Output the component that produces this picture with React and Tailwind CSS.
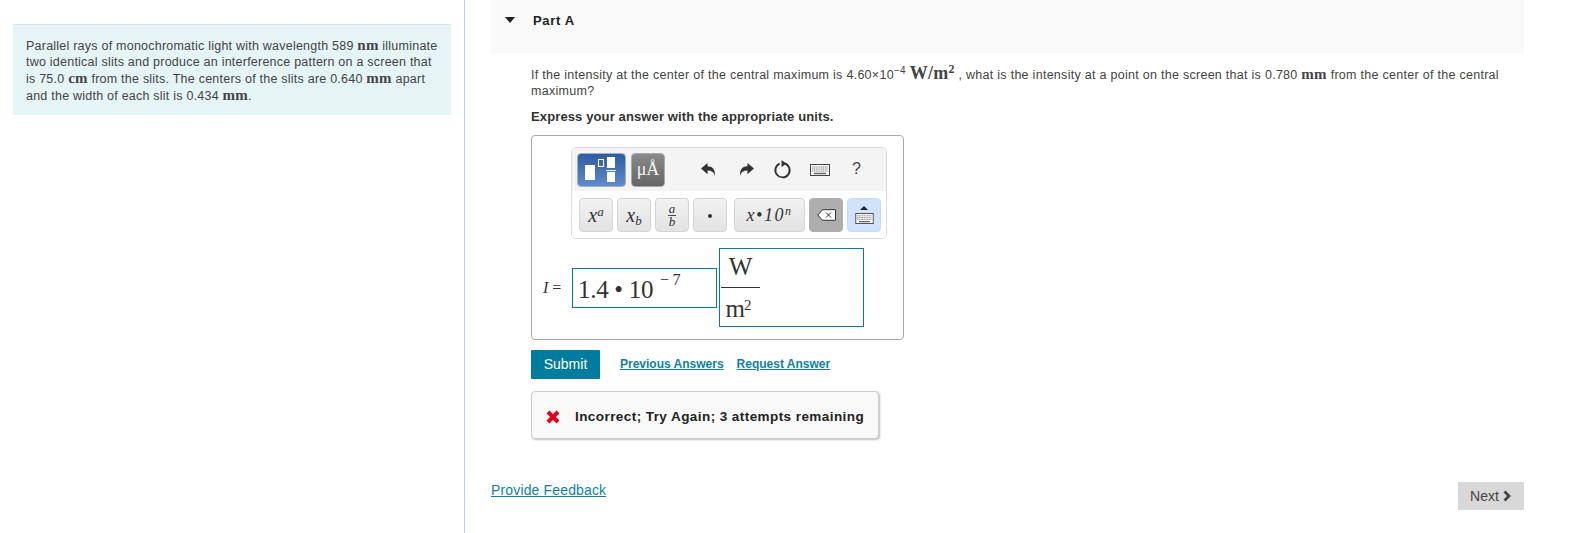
const M = ({ children }) => (
  <span className="font-['Liberation_Serif',serif] text-[15px] font-bold text-[#444]">{children}</span>
);

const KeyboardIcon = ({ className }) => (
  <svg viewBox="0 0 20 12" className={className}>
    <rect x="0.5" y="0.5" width="19" height="11" fill="#fff" stroke="#444" />
    <path d="M2 3h16M2 5h16M2 7h16" stroke="#777" strokeWidth="1" strokeDasharray="1.2 .6" />
    <path d="M4 9.500h12" stroke="#666" strokeWidth="1.400" />
  </svg>
);

const MathKey = ({ children, className = "w-[34px]" }) => (
  <div className={`${className} h-[34px] flex items-center justify-center rounded-[4px] border border-[#d4d4d4] bg-gradient-to-b from-[#f2f2f2] to-[#e2e2e2] font-['Liberation_Serif',serif] italic text-[#333]`}>
    {children}
  </div>
);

export default function App() {
  return (
    <div className="flex h-[533px] w-[1575px] overflow-hidden bg-white font-['Liberation_Sans',sans-serif] text-[#333]">
      <aside className="w-[465px] shrink-0 border-r border-[#bcd0e6] pl-[13px] pr-[13px] pt-[24px]">
        <div className="h-[91px] border-t border-[#d5e3e6] bg-[#e5f5f6] px-[13px] pt-[12px] text-[12.5px] leading-[16px] tracking-[0.23px] text-[#444]">
          Parallel rays of monochromatic light with wavelength 589 <M>nm</M> illuminate two identical slits and produce an interference pattern on a screen that is 75.0 <M>cm</M> from the slits. The centers of the slits are 0.640 <M>mm</M> apart and the width of each slit is 0.434 <M>mm</M>.
        </div>
      </aside>

      <main className="flex w-[1059px] shrink-0 flex-col pl-[26px]">
        <div className="flex h-[53px] w-[1033px] items-start bg-[#f9f9f9] pl-[14px] pt-[13px]">
          <svg viewBox="0 0 10 6" className="mt-[4px] h-[6px] w-[10px] fill-[#222]"><path d="M0 0h10L5 6z" /></svg>
          <span className="ml-[18px] text-[13px] font-bold leading-[16px] tracking-[0.65px] text-[#222]">Part A</span>
        </div>

        <div className="flex flex-1 flex-col pl-[40px]">
          <p className="mt-[12px] w-[975px] text-[12.5px] leading-[16px] tracking-[0.28px] text-[#444]">
            If the intensity at the center of the central maximum is 4.60×10<sup className="text-[10px] leading-none">−4</sup> <span className="font-['Liberation_Serif',serif] text-[18px] font-bold">W/m<sup className="text-[12px] leading-none">2</sup></span> , what is the intensity at a point on the screen that is 0.780 <M>mm</M> from the center of the central maximum?
          </p>
          <p className="mt-[10px] text-[13px] font-bold leading-[16px] tracking-[0.12px] text-[#333]">Express your answer with the appropriate units.</p>

          <div className="mt-[10px] h-[205px] w-[373px] rounded-[4px] border border-[#aaa] pl-[39px] pt-[11px]">
            <div className="h-[92px] w-[316px] overflow-hidden rounded-[5px] border border-[#ddd]">
              <div className="flex h-[43px] items-start bg-[#f4f4f4] pl-[5px] pt-[5px]">
                <div className="flex h-[34px] w-[49px] items-center justify-center rounded-[4px] border border-[#9fb0cc] bg-gradient-to-b from-[#2f5ba3] to-[#5f8ccb]">
                  <svg viewBox="0 0 40 26" className="h-[26px] w-[40px] fill-white">
                    <rect x="3" y="8" width="10" height="15" />
                    <rect x="16.500" y="2.500" width="5" height="7" fill="none" stroke="#fff" strokeWidth="1" />
                    <rect x="25" y="0" width="8" height="11" />
                    <rect x="24" y="13" width="10" height="1" />
                    <rect x="25" y="15" width="8" height="10" />
                  </svg>
                </div>
                <div className="ml-[5px] flex h-[34px] w-[34px] items-center justify-center rounded-[4px] border border-[#aaa] bg-gradient-to-b from-[#8a8a8a] to-[#666] pb-[2px] font-['Liberation_Serif',serif] text-[18px] leading-none text-[#f4f4f4]">
                  μÅ
                </div>
                <svg viewBox="0 0 16 14" className="ml-[36px] mt-[9px] h-[15px] w-[15px] fill-[#333]"><path d="M0 6 7 0v3.600c5 .1 8.200 3.200 8 10.200-1-3.800-3.500-5.800-8-5.800V12z" /></svg>
                <svg viewBox="0 0 16 14" className="ml-[23px] mt-[9px] h-[15px] w-[15px] fill-[#333]"><path d="M16 6 9 0v3.600C4 3.700.8 6.800 1 13.800 2 10 4.500 8 9 8v4z" /></svg>
                <svg viewBox="0 0 20 20" fill="none" className="ml-[19px] mt-[7px] h-[19px] w-[19px]">
                  <path d="M12.500 3.700a7.500 7.500 0 1 1-5.500.2" stroke="#333" strokeWidth="2" />
                  <path d="M9 0v7.500l5-3.700z" fill="#333" />
                </svg>
                <KeyboardIcon className="ml-[18px] mt-[11px] h-[12px] w-[20px]" />
                <span className="ml-[22px] mt-[6px] text-[16px] leading-[20px] text-[#444]">?</span>
              </div>
              <div className="flex h-[47px] items-start gap-[4px] bg-white pl-[7px] pt-[7px]">
                <MathKey><span className="text-[20px]">x<sup className="text-[13px] leading-none">a</sup></span></MathKey>
                <MathKey><span className="text-[20px]">x<sub className="text-[13px] leading-none">b</sub></span></MathKey>
                <MathKey>
                  <span className="flex flex-col items-center text-[13px] leading-[12px]"><span className="border-b border-[#444] px-[1px]">a</span><span>b</span></span>
                </MathKey>
                <MathKey><span className="mt-[1px] h-[4px] w-[4px] rounded-full bg-[#333]" /></MathKey>
                <MathKey className="ml-[3px] w-[71px]"><span className="text-[18px] tracking-[1.5px]">x•10<sup className="text-[12px] leading-none">n</sup></span></MathKey>
                <div className="flex h-[34px] w-[34px] items-center justify-center rounded-[4px] border border-[#b0b0b0] bg-[#aeaeae]">
                  <svg viewBox="0 0 19 12" className="h-[12px] w-[19px]">
                    <path d="M.8 6 5.500.7h13v10.600h-13z" fill="#fff" stroke="#333" />
                    <path d="m9 3.500 5 5m0-5-5 5" stroke="#333" />
                  </svg>
                </div>
                <div className="flex h-[34px] w-[34px] flex-col items-center justify-center gap-[3px] rounded-[4px] border border-[#c5dcf5] bg-[#cfe4fc]">
                  <svg viewBox="0 0 8 4" className="h-[4px] w-[8px] fill-[#222]"><path d="M0 4h8L4 0z" /></svg>
                  <KeyboardIcon className="h-[11px] w-[19px]" />
                </div>
              </div>
            </div>

            <div className="-ml-[28px] mt-[9px] flex items-center font-['Liberation_Serif',serif] text-[#333]">
              <span className="w-[29px] text-[16px]"><i>I</i> =</span>
              <div className="flex h-[40px] w-[145px] items-center border border-[#007c9e] pl-[5px] pt-[3px] text-[25px] leading-none tracking-[-0.3px]">
                1.4 • 10<sup className="ml-[7px] -mt-[3px] text-[16px] leading-none">− 7</sup>
              </div>
              <div className="ml-[2px] h-[79px] w-[145px] border border-[#007c9e] pl-[1px] text-[25px] leading-none">
                <div className="flex w-[39px] flex-col items-center">
                  <span className="h-[39px] w-full border-b border-[#333] pt-[5px] text-center">W</span>
                  <span className="-ml-[4px] pt-[8px]">m<sup className="-ml-[1px] text-[15px] leading-none">2</sup></span>
                </div>
              </div>
            </div>
          </div>

          <div className="mt-[10px] flex items-center">
            <button className="h-[29px] w-[69px] rounded-[1px] bg-[#007c9e] text-[14px] text-white">Submit</button>
            <a className="mb-[2px] ml-[20px] text-[12px] font-bold text-[#0f81a5] underline">Previous Answers</a>
            <a className="mb-[2px] ml-[13px] text-[12px] font-bold text-[#0f81a5] underline">Request Answer</a>
          </div>

          <div className="mt-[12px] flex h-[48px] w-[348px] items-center rounded-[4px] border border-[#ccc] bg-[#f9f9f9] pl-[14px] pt-[4px] shadow-[1px_1px_2px_rgba(0,0,0,0.25)]">
            <svg viewBox="0 0 14 14" className="h-[14px] w-[14px]"><path d="M2 2l10 10M12 2 2 12" stroke="#e2001a" strokeWidth="4" /></svg>
            <span className="ml-[15px] text-[13.500px] font-bold tracking-[0.43px] text-[#222]">Incorrect; Try Again; 3 attempts remaining</span>
          </div>
        </div>

        <div className="mb-[23px] flex w-[1033px] items-end justify-between">
          <a className="mb-[12px] text-[14px] leading-[16px] tracking-[0.15px] text-[#0f81a5] underline">Provide Feedback</a>
          <div className="flex h-[28px] w-[66px] items-center justify-center gap-[4px] rounded-[1px] bg-[#d8d8d8] text-[14px] text-[#444]">
            Next
            <svg viewBox="0 0 9 12" className="h-[12px] w-[9px]"><path d="M1.500 1.500 6 6l-4.500 4.500" fill="none" stroke="#444" strokeWidth="2.800" /></svg>
          </div>
        </div>
      </main>
    </div>
  );
}
